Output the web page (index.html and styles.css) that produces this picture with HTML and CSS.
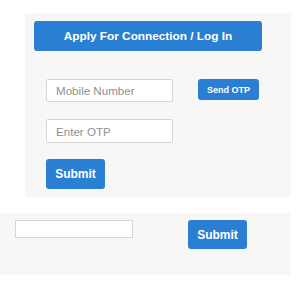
FILE: index.html
```html
<html>
    <head>
        <title>Apply For Connection</title>
        <link rel="stylesheet" href="styles.css">
    </head>
    <body>
        <div class="loginPanel">
            <div class="panelHeader">Apply For Connection / Log In</div>
            <div class="formRow firstRow">
                <input type="text" class="textField" placeholder="Mobile Number" />
                <button class="otpButton">Send OTP</button>
            </div>
            <div class="formRow">
                <input type="text" class="textField otpField" placeholder="Enter OTP" />
            </div>
            <button class="submitButton">Submit</button>
        </div>
        <div class="bottomPanel">
            <input type="text" class="smallField" />
            <button class="submitButton bottomSubmit">Submit</button>
        </div>
    </body>
</html>
```

FILE: styles.css
```css
body{
    margin: 0;
    background: #ffffff;
    font-family: "Liberation Sans", Arial, sans-serif;
}
.loginPanel{
    margin: 13px 0 0 25px;
    width: 266px;
    height: 184px;
    box-sizing: border-box;
    background: #f7f7f7;
    padding: 8px 0 0 9px;
}
.panelHeader{
    width: 228px;
    height: 30px;
    background: #2b7fd3;
    border-radius: 3px;
    color: #ffffff;
    font-weight: bold;
    font-size: 11.8px;
    display: flex;
    align-items: center;
    justify-content: center;
}
.formRow{
    display: flex;
    align-items: flex-start;
    margin-left: 12px;
}
.firstRow{
    margin-top: 28px;
}
.textField{
    width: 127px;
    height: 23px;
    box-sizing: border-box;
    border: 1px solid #d6d6d6;
    border-radius: 2px;
    background: #ffffff;
    font-family: "Liberation Sans", Arial, sans-serif;
    font-size: 11.6px;
    padding: 0 9px;
    margin: 0;
}
.textField::placeholder{
    color: #909090;
}
.otpField{
    height: 24px;
    margin-top: 17px;
}
.otpButton{
    margin: 0 0 0 25px;
    width: 61px;
    height: 21px;
    background: #2b7fd3;
    border: none;
    border-radius: 3px;
    color: #ffffff;
    font-family: "Liberation Sans", Arial, sans-serif;
    font-weight: bold;
    font-size: 9px;
    padding: 0;
}
.submitButton{
    display: block;
    margin: 16px 0 0 12px;
    width: 59px;
    height: 30px;
    background: #2b7fd3;
    border: none;
    border-radius: 3px;
    color: #ffffff;
    font-family: "Liberation Sans", Arial, sans-serif;
    font-weight: bold;
    font-size: 12px;
    padding: 0;
}
.bottomPanel{
    margin-top: 16px;
    width: 290px;
    height: 62px;
    box-sizing: border-box;
    background: #f7f7f7;
    padding: 7px 0 0 15px;
    display: flex;
    align-items: flex-start;
}
.smallField{
    width: 118px;
    height: 18px;
    box-sizing: border-box;
    border: 1px solid #d6d6d6;
    background: #ffffff;
    margin: 0;
    padding: 0;
}
.bottomSubmit{
    margin: 0 0 0 55px;
    height: 29px;
}
```
